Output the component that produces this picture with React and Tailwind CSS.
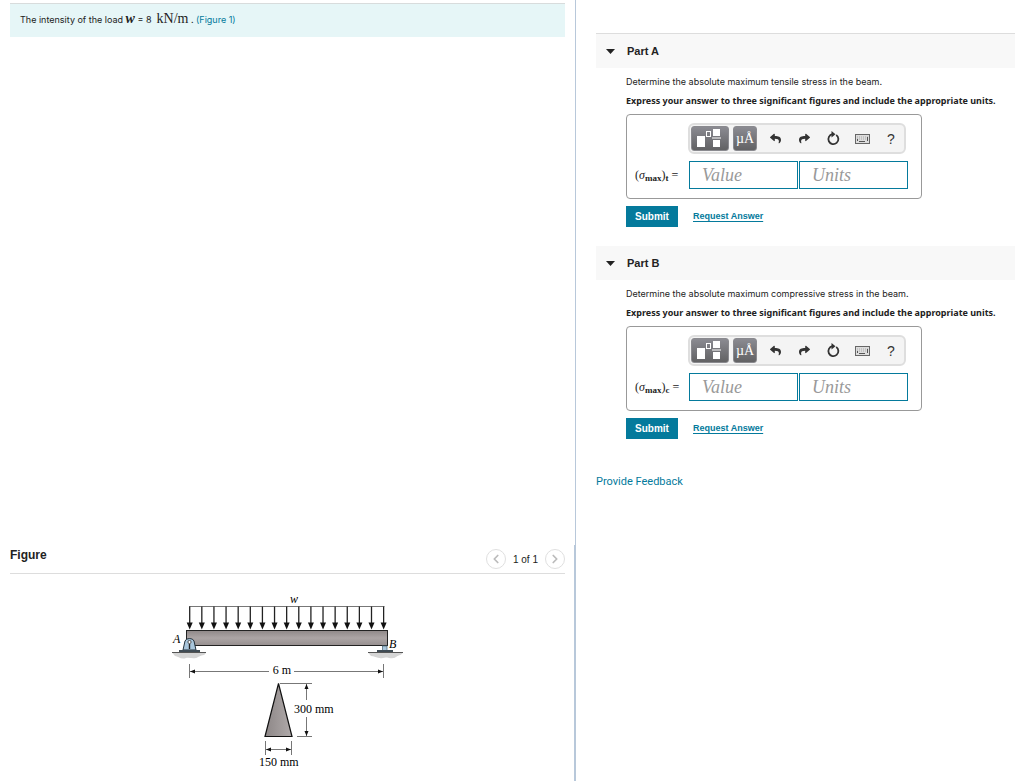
import React, { useState } from "react";
import { FaReply, FaShare } from "react-icons/fa";
import { ChevronLeft, ChevronRight } from "lucide-react";

const parts = [
  { id: "A", kind: "tensile", sub: "t" },
  { id: "B", kind: "compressive", sub: "c" },
];

/* ---------------- ICONS ---------------- */
const TemplateIcon = () => (
  <svg width="26" height="21" viewBox="0 0 26 21" aria-hidden="true">
    <rect x="0" y="8" width="8" height="11" fill="#fff" />
    <rect x="9.5" y="3.5" width="4" height="5" fill="none" stroke="#fff" />
    <rect x="16" y="1" width="7" height="7" fill="#fff" />
    <rect x="15" y="9.5" width="9" height="1" fill="#fff" />
    <rect x="16" y="12" width="7" height="7" fill="#fff" />
  </svg>
);

const ResetIcon = () => (
  <svg width="14" height="15" viewBox="0 0 14 15" aria-hidden="true">
    <path d="M10.2 4A5 5 0 1 1 6.5 3.2" fill="none" stroke="#333" strokeWidth="1.8" />
    <path d="M5.5 0L9.5 3.2L5.5 6.4Z" fill="#333" />
  </svg>
);

const KeyboardIcon = () => (
  <svg width="15" height="10" viewBox="0 0 15 10" aria-hidden="true">
    <rect x="0.5" y="0.5" width="14" height="9" fill="#ddd" stroke="#666" />
    <path d="M2 3H13M2 5H11" stroke="#aaa" strokeDasharray="1 1" />
    <path d="M2.5 5V7M4 7.5H10M12.5 3V7" stroke="#555" />
  </svg>
);

/* ---------------- ANSWER BOX ---------------- */
const Toolbar = () => {
  const dark =
    "flex h-[25px] items-center justify-center rounded-[3px] border border-[#8a8a8f] bg-linear-to-b from-[#8b8b92] to-[#626264] text-white";
  const plain = "flex h-6 w-6 items-center justify-center text-[#333]";

  return (
    <div className="flex h-[31px] w-[218px] items-center rounded-md border-2 border-[#dedede] bg-[#f4f4f4] pl-px">
      <button type="button" aria-label="Templates" className={`${dark} w-[38px]`}>
        <TemplateIcon />
      </button>
      <button
        type="button"
        aria-label="Symbols"
        className={`${dark} ml-1 mr-1.5 w-6 font-['Liberation_Serif',serif] text-sm`}
      >
        µÅ
      </button>
      <div className="flex gap-[5px]">
        <button type="button" aria-label="Undo" className={plain}>
          <FaReply size={11} />
        </button>
        <button type="button" aria-label="Redo" className={plain}>
          <FaShare size={11} />
        </button>
        <button type="button" aria-label="Reset" className={plain}>
          <ResetIcon />
        </button>
        <button type="button" aria-label="Keyboard" className={plain}>
          <KeyboardIcon />
        </button>
        <button type="button" aria-label="Help" className={`${plain} text-sm`}>
          ?
        </button>
      </div>
    </div>
  );
};

const Part = ({ id, kind, sub }) => {
  const [open, setOpen] = useState(true);
  const [value, setValue] = useState("");
  const [units, setUnits] = useState("");

  const field =
    "h-7 w-[109px] border border-[#047a9c] bg-white px-3 font-['Liberation_Serif',serif] text-lg outline-none placeholder:italic placeholder:text-[#999]";

  return (
    <section>
      <h2 className="bg-[#f8f8f8]">
        <button
          type="button"
          onClick={() => setOpen(!open)}
          className="flex h-[34px] w-full items-center gap-3 px-2.5 text-[11px] font-bold"
        >
          <svg width="9" height="5" viewBox="0 0 9 5" aria-hidden="true">
            <path d="M0 0H9L4.5 5Z" fill="#222" />
          </svg>
          Part {id}
        </button>
      </h2>

      {open && (
        <form onSubmit={(e) => e.preventDefault()} className="pb-[19px] pl-[30px] pt-1">
          <div className="text-[9px] leading-[19px]">
            <p className="font-[Inter,sans-serif]">
              Determine the absolute maximum {kind} stress in the beam.
            </p>
            <p className="whitespace-nowrap font-['Noto_Sans',sans-serif] font-bold">
              Express your answer to three significant figures and include the appropriate units.
            </p>
          </div>

          <div className="mt-1 w-[296px] rounded border border-[#999] py-2 pl-2">
            <div className="pl-[53px]">
              <Toolbar />
            </div>
            <div className="mb-px mt-[7px] flex items-center">
              <label
                htmlFor={`value-${id}`}
                className="w-[54px] whitespace-nowrap font-['Liberation_Serif',serif] text-xs"
              >
                (<i>σ</i>
                <sub className="text-[9px] font-bold">max</sub>)
                <sub className="text-[9px] font-bold">{sub}</sub> =
              </label>
              <div className="flex gap-px">
                <input
                  id={`value-${id}`}
                  value={value}
                  onChange={(e) => setValue(e.target.value)}
                  placeholder="Value"
                  className={field}
                />
                <input
                  aria-label="Units"
                  value={units}
                  onChange={(e) => setUnits(e.target.value)}
                  placeholder="Units"
                  className={field}
                />
              </div>
            </div>
          </div>

          <div className="mt-[7px] flex items-center gap-[15px]">
            <button type="submit" className="h-[21px] w-[52px] bg-[#047a9c] font-bold text-white">
              Submit
            </button>
            <a href="#answer" className="text-[9px] font-bold text-[#047a9c] underline underline-offset-2">
              Request Answer
            </a>
          </div>
        </form>
      )}
    </section>
  );
};

/* ---------------- FIGURE ---------------- */
const BeamFigure = () => {
  const loads = Array.from({ length: 17 }, (_, i) => 24.7 + i * 12.12);

  return (
    <svg
      width="245"
      height="180"
      viewBox="0 0 245 180"
      role="img"
      aria-label="Simply supported beam with a triangular cross section"
      className="mx-auto font-['Liberation_Serif',serif] text-xs"
    >
      <defs>
        <linearGradient id="beam" x1="0" y1="0" x2="0" y2="1">
          <stop offset="0" stopColor="#8f8888" />
          <stop offset="0.5" stopColor="#aca5a5" />
          <stop offset="1" stopColor="#968f8f" />
        </linearGradient>
        <linearGradient id="section" x1="0" y1="0" x2="1" y2="0">
          <stop offset="0" stopColor="#8d8787" />
          <stop offset="1" stopColor="#b0aaaa" />
        </linearGradient>
      </defs>

      {/* distributed load */}
      <path d="M24 16.5H219.5" stroke="#777" />
      {loads.map((x) => (
        <g key={x}>
          <path d={`M${x} 16.5V34`} stroke="#222" strokeWidth="1.3" />
          <path d={`M${x - 3} 32.5H${x + 3}L${x} 39.5Z`} fill="#111" />
        </g>
      ))}
      <text x="125" y="13" fontStyle="italic">w</text>

      {/* beam */}
      <rect x="21.5" y="40.5" width="201" height="15" fill="url(#beam)" stroke="#222" />

      {/* pin support */}
      <path d="M7 62.5H41C40 66 36 65 33 67C29 70 25 67 21 68C16 70 13 66 10 66Z" fill="#d5d5d5" />
      <path d="M7 62.5H41" stroke="#555" />
      <path d="M18 60L20 51Q21 48.5 24.5 48.5Q28 48.5 29 51L31 60Z" fill="#a9c6dc" stroke="#24323c" />
      <circle cx="24.5" cy="52" r="1.6" fill="#fff" stroke="#333" strokeWidth="0.8" />
      <path d="M24.5 54V59" stroke="#222" strokeWidth="1.4" />
      <rect x="14" y="60" width="21" height="2" fill="#3f4b54" />

      {/* roller support */}
      <path d="M203 62.5H238C237 65 234 65 231 67C227 70 222 66 218 68C213 69 209 66 206 66Z" fill="#d5d5d5" />
      <path d="M203 62.5H238" stroke="#555" />
      <rect x="217.5" y="56" width="4.5" height="4.5" fill="#a9c6dc" stroke="#56707f" strokeWidth="0.8" />
      <rect x="212" y="60" width="16" height="2" fill="#3f4b54" />
      <text x="8" y="53" fontStyle="italic">A</text>
      <text x="224" y="58" fontStyle="italic">B</text>

      {/* span */}
      <path d="M24.5 74V88M218.5 74V88M25 81.5H104M129 81.5H218" stroke="#777" fill="none" />
      <path d="M25 81.5L30 79.5V83.5ZM218 81.5L213 79.5V83.5Z" fill="#111" />
      <text x="117" y="84" textAnchor="middle">6 m</text>

      {/* cross section */}
      <path d="M113.5 93.5L127 146.5H100Z" fill="url(#section)" stroke="#111" strokeWidth="1.2" />
      <path
        d="M115 93.5H147M132 146.5H147M141.5 94V110M141.5 127V146M100.5 151V165M126.5 151V165M101 159.5H126"
        stroke="#777"
        fill="none"
      />
      <path
        d="M141.5 94L139.5 99H143.5ZM141.5 146L139.5 141H143.5ZM101 159.5L106 157.5V161.5ZM126 159.5L121 157.5V161.5Z"
        fill="#111"
      />
      <text x="129" y="123">300 mm</text>
      <text x="94" y="176">150 mm</text>
    </svg>
  );
};

const App = () => {
  const pager =
    "flex h-5 w-5 items-center justify-center rounded-full border border-[#e0e0e0] text-[#bbb]";

  return (
    <div className="grid min-h-screen grid-cols-[576fr_439fr] bg-white font-['Liberation_Sans',Arial,sans-serif] text-[10px] text-[#222]">

      {/* LEFT */}
      <div className="flex min-w-0 flex-col">
        <div className="grow border-r border-[#b8c8da] pl-2.5 pr-2.5 pt-[3px]">
          <div className="flex h-[34px] items-center whitespace-pre border-t border-[#d8dcdc] bg-[#e6f6f7] px-2.5 pb-[3px]">
            <p className="font-[Inter,sans-serif] text-[9px]">
              The intensity of the load{" "}
              <i className="font-['Liberation_Serif',serif] text-sm font-bold leading-4">w</i> = 8{"  "}
              <span className="font-['Liberation_Serif',serif] text-sm leading-4">kN/m</span> .{" "}
              <a href="#figure" className="text-[#047a9c]">(Figure 1)</a>
            </p>
          </div>
        </div>

        <div id="figure" className="border-r-2 border-[#b8c8da] pb-[11px] pl-2.5 pr-[9px]">
          <div className="flex h-[29px] items-center justify-between border-b border-[#ddd]">
            <h2 className="pb-2 text-xs font-bold">Figure</h2>
            <div className="flex items-center gap-[7px]">
              <button type="button" aria-label="Previous figure" className={pager}>
                <ChevronLeft size={14} strokeWidth={3} />
              </button>
              <span>1 of 1</span>
              <button type="button" aria-label="Next figure" className={pager}>
                <ChevronRight size={14} strokeWidth={3} />
              </button>
            </div>
          </div>
          <div className="pt-4">
            <BeamFigure />
          </div>
        </div>
      </div>

      {/* RIGHT */}
      <main className="min-w-0 pl-5 pt-[33px]">
        <div className="border-t border-[#ddd]">
          {parts.map((part) => (
            <Part key={part.id} {...part} />
          ))}
        </div>
        <a
          href="#feedback"
          className="mt-4 inline-block font-[Roboto,sans-serif] text-[11px] leading-4 text-[#047a9c]"
        >
          Provide Feedback
        </a>
      </main>
    </div>
  );
};

export default App;
